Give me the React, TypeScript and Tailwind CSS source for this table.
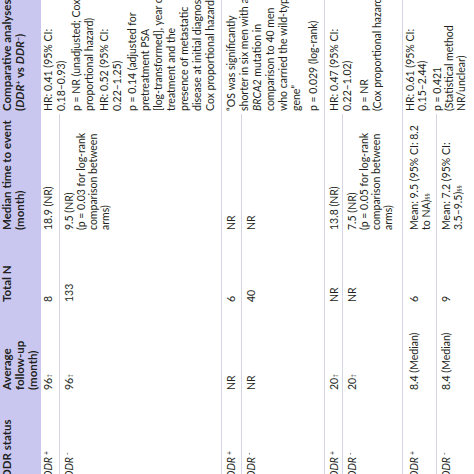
import React from 'react';

const line = 'border-[#d6d5e8]';

function Sup({ children }: { children: React.ReactNode }) {
    return <sup className="text-[6.5px] relative -top-[1px]">{children}</sup>;
}

function Ddr({ sign }: { sign: string }) {
    return (
        <span>
            <i>DDR</i>
            <sup className="text-[7px] ml-[2px]">{sign}</sup>
        </span>
    );
}

function Cells({ a, b, c, d, h, pt = 'pt-[3px]', border }: {
    a: React.ReactNode; b: React.ReactNode; c: React.ReactNode; d: React.ReactNode;
    h?: string; pt?: string; border?: boolean;
}) {
    return (
        <div className={`flex ${h ?? 'flex-1'} ${pt} ${border ? `border-b ${line}` : ''}`}>
            <div className="w-[88px] shrink-0">{a}</div>
            <div className="w-[88px] shrink-0">{b}</div>
            <div className="w-[72px] shrink-0">{c}</div>
            <div className="flex-1 whitespace-nowrap">{d}</div>
        </div>
    );
}

function Group({ top, bottom, comp, h, last, compClass = 'pt-[3px] leading-[13px]' }: {
    top: React.ReactNode; bottom: React.ReactNode; comp: React.ReactNode; h: string; last?: boolean; compClass?: string;
}) {
    return (
        <div className={`flex ${h} shrink-0 ${last ? '' : `border-b ${line}`}`}>
            <div className="w-[364px] shrink-0 flex flex-col">
                {top}
                {bottom}
            </div>
            <div className={`flex-1 pl-[3px] whitespace-nowrap overflow-hidden ${compClass}`}>{comp}</div>
        </div>
    );
}

export default function App() {
    return (
        <div className="w-[474px] h-[474px] overflow-hidden bg-white">
            <div className="w-[474px] h-[474px] -rotate-90 overflow-hidden text-[#231f20] [font-family:Lato,'Open_Sans',sans-serif] text-[10.5px] leading-[12px]">
                <div className="ml-[-4px] w-[484px] h-full flex flex-col">
                    {/* Header */}
                    <div className="flex h-[41px] shrink-0 bg-[#c9c7f0] font-bold text-[11.5px] leading-[13px]">
                        <div className="w-[88px] shrink-0">DDR status</div>
                        <div className="w-[88px] shrink-0">Average<br />follow-up<br />(month)</div>
                        <div className="w-[72px] shrink-0">Total N</div>
                        <div className="w-[116px] shrink-0 whitespace-nowrap">Median time to event<br />(month)</div>
                        <div className="flex-1 pl-[3px] whitespace-nowrap">Comparative analyses<br />(<i>DDR</i><sup className="text-[7px]">+</sup> vs <i>DDR</i><sup className="text-[7px]">−</sup>)</div>
                    </div>

                    <Group
                        h="h-[181px]"
                        compClass="pt-[1px] leading-[13px]"
                        top={<Cells h="h-[19px] shrink-0" pt="pt-[1px]" border a={<Ddr sign="+" />} b={<>96<Sup>†</Sup></>} c="8" d="18.9 (NR)" />}
                        bottom={<Cells a={<Ddr sign="-" />} b={<>96<Sup>†</Sup></>} c="133" d={<>9.5 (NR)<br />(p = 0.03 for log-rank<br />comparison between<br />arms)</>} />}
                        comp={
                            <>
                                <div>HR: 0.41 (95% CI:<br />0.18–0.93)</div>
                                <div className="mt-[2px]">p = NR (unadjusted; Cox<br />proportional hazard)</div>
                                <div className="mt-[2px]">HR: 0.52 (95% CI:<br />0.22–1.25)</div>
                                <div className="mt-[2px]">p = 0.14 (adjusted for<br />pretreatment PSA<br />[log-transformed], year of<br />treatment and the<br />presence of metastatic<br />disease at initial diagnosis;<br />Cox proportional hazard)</div>
                            </>
                        }
                    />

                    <Group
                        h="h-[103px]"
                        top={<Cells h="h-[20px] shrink-0" border a={<Ddr sign="+" />} b="NR" c="6" d="NR" />}
                        bottom={<Cells a={<Ddr sign="-" />} b="NR" c="40" d="NR" />}
                        comp={
                            <>
                                <div>“OS was significantly<br />shorter in six men with a<br /><i>BRCA2</i> mutation in<br />comparison to 40 men<br />who carried the wild-type<br />gene”</div>
                                <div className="mt-[4px]">p = 0.029 (log-rank)</div>
                            </>
                        }
                    />

                    <Group
                        h="h-[78px]"
                        top={<Cells h="h-[18px] shrink-0" border a={<Ddr sign="+" />} b={<>20<Sup>†</Sup></>} c="NR" d="13.8 (NR)" />}
                        bottom={<Cells a={<Ddr sign="-" />} b={<>20<Sup>†</Sup></>} c="NR" d={<>7.5 (NR)<br />(p = 0.05 for log-rank<br />comparison between<br />arms)</>} />}
                        comp={
                            <>
                                <div>HR: 0.47 (95% CI:<br />0.22–1.02)</div>
                                <div className="mt-[4px]">p = NR<br />(Cox proportional hazard)</div>
                            </>
                        }
                    />

                    <Group
                        h="flex-1"
                        last
                        compClass="pt-[1px] leading-[12px]"
                        top={<Cells h="h-[34px] shrink-0" pt="pt-[5px]" border a={<Ddr sign="+" />} b="8.4 (Median)" c="6" d={<>Mean: 9.5 (95% CI: 8.2<br />to NA)<Sup>§§</Sup></>} />}
                        bottom={<Cells a={<Ddr sign="-" />} b="8.4 (Median)" c="9" d={<>Mean: 7.2 (95% CI:<br />3.5–9.5)<Sup>§§</Sup></>} />}
                        comp={
                            <>
                                <div>HR: 0.61 (95% CI:<br />0.15–2.44)</div>
                                <div className="mt-[3px]">p = 0.421<br />(Statistical method<br />NR/unclear)</div>
                            </>
                        }
                    />
                </div>
            </div>
        </div>
    );
}
